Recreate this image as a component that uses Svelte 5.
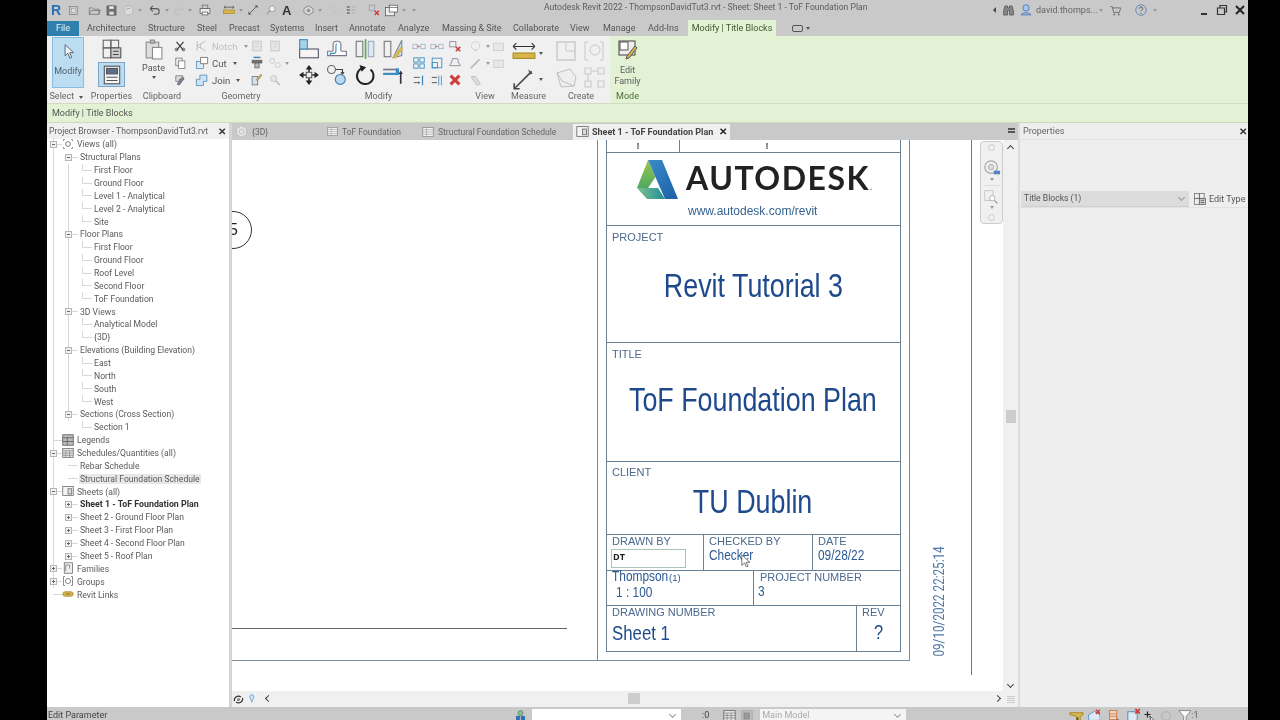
<script>
  const L = '#666', B = '#3b8ec4', Y = '#d9b64a', R = '#d23b3b';
  const rect = (x, y, w, h, s = L, f = 'none') => `<rect x="${x}" y="${y}" width="${w}" height="${h}" fill="${f}" stroke="${s}"/>`;
  const line = (d, s = L, w = 1) => `<path d="${d}" fill="none" stroke="${s}" stroke-width="${w}"/>`;
  const icons = {
    doc: rect(3, 3, 14, 14) + rect(6, 6, 8, 8, '#999', '#ddd'),
    open: line('M2 16V6h5l2 2h8v8zM2 16l3-6h14l-3 6'),
    save: rect(3, 3, 14, 14, '#555', '#777') + rect(6, 3, 8, 5, '#555', '#eee') + rect(6, 11, 8, 6, '#555', '#ddd'),
    sync: `<circle cx="10" cy="10" r="7" fill="#ddd" stroke="#aaa"/>` + line('M6 10a4 4 0 0 1 7-2', '#888'),
    undo: line('M3 8h9a4 4 0 0 1 0 8H8M3 8l4-4M3 8l4 4', '#555', 1.5),
    redo: line('M17 8H8a4 4 0 0 0 0 8h4M17 8l-4-4M17 8l-4 4', '#bbb', 1.5),
    print: rect(3, 8, 14, 7, '#555', '#eee') + rect(6, 3, 8, 5) + rect(6, 13, 8, 4, '#555', '#fff'),
    meas: rect(2, 10, 16, 5, '#a88a2a', Y) + line('M3 6h14M3 6l2-2M3 6l2 2M17 6l-2-2M17 6l-2 2', '#444'),
    dim: line('M3 17L17 3M3 13v4h4M13 3h4v4', '#444', 1.3),
    tag: `<circle cx="12" cy="8" r="5" fill="#eee" stroke="#777"/>` + line('M8 11l-5 6', '#555'),
    thd: `<path d="M10 3l7 4v6l-7 4-7-4V7z" fill="#ddd" stroke="#666"/><circle cx="10" cy="10" r="3" fill="#999"/>`,
    bulb: `<circle cx="10" cy="8" r="5" fill="none" stroke="#bbb"/>` + line('M8 14h4M8 17h4', '#bbb'),
    thin: line('M3 5h5M3 10h5M3 15h5', '#444', 2) + line('M11 5h6M11 10h6M11 15h6', '#8a8', 1),
    closeh: rect(3, 3, 8, 8, '#99a') + `<path d="M11 11l6 6M17 11l-6 6" stroke="${R}" stroke-width="2"/>`,
    wins: rect(2, 6, 12, 11, '#555', '#eee') + rect(7, 3, 11, 9, '#555', '#fff') + line('M7 6h11'),
    binoc: `<path d="M2.500 10l2-7h4v3h3V3h4l2 7v7h-6v-7h-3v7h-6z" fill="#888" stroke="#444"/>`,
    user: `<circle cx="10" cy="7" r="4.5" fill="#a9c6e8" stroke="#2d62ad"/><path d="M3 17c1-4 13-4 14 0z" fill="#a9c6e8" stroke="#2d62ad"/>`,
    cart: line('M2 4h3l2 9h9l2-7H6', '#666', 1.3) + `<circle cx="8" cy="16" r="1.4" fill="#666"/><circle cx="15" cy="16" r="1.4" fill="#666"/>`,
    help: `<circle cx="10" cy="10" r="7.5" fill="none" stroke="#4b7fb5" stroke-width="1.2"/><path d="M7.5 8a2.5 2.5 0 1 1 3.5 2.3c-.8.4-1 .8-1 1.7M10 14v1.5" fill="none" stroke="#555" stroke-width="1.3"/>`,
    arrow: `<path d="M6 2v13l3.2-3 2.4 6 2.2-1-2.4-5.6H16z" fill="#eef4fa" stroke="#4a5560"/>`,
    types: rect(2, 2, 7, 7) + rect(9, 2, 7, 7) + rect(2, 9, 7, 9) + rect(9, 9, 9, 9, '#555', '#ccc') + line('M11 12h5M11 15h5', '#444'),
    props: rect(3, 2, 14, 16, '#555', '#f4f4f4') + rect(5, 4, 10, 5, '#556', '#5c6f86') + line('M5 12h10M5 15h10', '#555'),
    paste: rect(3, 3, 12, 15, '#888', '#ddd') + rect(7, 1, 4, 3, '#888', '#bbb') + rect(9, 8, 9, 11, '#888', '#fff'),
    scis: line('M5 4l10 12M15 4L5 16', '#333', 1.5) + `<circle cx="5" cy="15" r="2" fill="none" stroke="#333"/><circle cx="15" cy="15" r="2" fill="none" stroke="#333"/>`,
    copy: rect(4, 3, 9, 11) + rect(8, 7, 9, 11, '#666', '#fff'),
    brush: `<path d="M4 4h10v5H9v3H4z" fill="#ddd" stroke="#666"/><path d="M16 8l-7 9-3-1 7-10z" fill="#8a7ab0" stroke="#554"/>`,
    notch: line('M3 3v14M3 10l12-7M3 10l12 7M8 7v6', '#bbb', 1.3),
    gsq: rect(4, 3, 12, 14, '#bbb', '#e6e6e6') + line('M7 7h6M7 11h6', '#ccc'),
    cut: rect(2, 8, 10, 10, '#3b7fb5', '#dceaf5') + `<path d="M8 2h10v9H8z" fill="#fff" stroke="#555"/>`,
    join: `<path d="M7 3h10v9h-5v6H2v-9h5z" fill="#cfe2f2" stroke="#3b7fb5"/>`,
    wall: rect(3, 6, 14, 4, '#555', '#777') + rect(7, 10, 6, 7, '#555', '#bbb') + line('M5 2h10', '#3b7fb5', 2),
    ggrp: `<circle cx="6" cy="7" r="3.5" fill="none" stroke="#bbb"/><circle cx="14" cy="13" r="3.5" fill="none" stroke="#bbb"/>`,
    paint: rect(3, 5, 8, 12, '#666', '#cfe0ee') + `<path d="M17 3l-6 8-2-1 6-8z" fill="${Y}" stroke="#886"/>`,
    mag: `<circle cx="8" cy="8" r="4.5" fill="#e4e4e4" stroke="#bbb"/>` + line('M11 11l6 6', '#bbb', 2),
    align: rect(1.500, 10, 17, 8, '#556', '#f4f4f4') + rect(1.500, 1.500, 7, 8.500, '#3b8ec4', '#a8d0ea'),
    offset: `<path d="M1.500 16v-4h4q1 0 1-1V6q0-3 3-3h1q3 0 3 3v5q0 1 1 1h4v4z" fill="#fff" stroke="#778"/><path d="M4 16v-2h3q2 0 2-2V7q0-1.500 1-1.500" fill="none" stroke="#3b8ec4"/>`,
    mirror: rect(2, 3, 6, 14, '#777') + rect(13, 3, 5, 14, '#9ab', '#dde8ef') + line('M10.500 1v18', '#5a5', 1.5),
    mirror2: rect(2, 3, 6, 14, '#777') + `<path d="M10 18L18 2v14z" fill="#cfe2f2" stroke="#789"/><path d="M18 9l-7 9" stroke="${Y}" stroke-width="3"/>`,
    move: `<path d="M10 1l3 4H7zM10 19l3-4H7zM1 10l4-3v6zM19 10l-4-3v6z" fill="#222"/>` + rect(7.5, 7.5, 5, 5, '#555', '#e8f1f8') + line('M10 4v3M10 13v3M4 10h3M13 10h3', '#222', 1.4),
    copym: `<circle cx="5" cy="5" r="3.6" fill="none" stroke="#666"/>` + `<circle cx="13" cy="14" r="4.5" fill="#bcd8ee" stroke="#3b7fb5"/>` + line('M9 5h6v4M13.500 7.500l1.500 1.500 1.500-1.500', '#444'),
    rotate: `<path d="M15 5a7.500 7.500 0 1 1-8-1" fill="none" stroke="#222" stroke-width="1.800"/><path d="M5 1l6 2-4 4z" fill="#222"/>`,
    trim: line('M1 5h14', '#778', 1.500) + line('M1 9h12', '#3b8ec4', 2) + line('M14 4v6', '#3b8ec4', 3) + line('M17 8v10', '#334', 1.500) + `<path d="M15 9l2-3 2 3z" fill="#334"/>`,
    s1: rect(1, 6, 5, 5, '#a8b4bc') + rect(10, 6, 5, 5, '#9ab8d0') + `<path d="M6 8.500h4M7.500 7l-1.500 1.500 1.500 1.500" fill="none" stroke="#b88"/>`,
    s2: rect(2, 2, 5, 5, B) + rect(9, 2, 5, 5, B) + rect(2, 9, 5, 5, B) + rect(9, 9, 5, 5, B),
    s3: line('M2 5h7M2 11h7', '#555') + `<path d="M9 11l-2-1.500v3z" fill="#555"/>` + line('M12 3v11', B, 1.5),
    s5: rect(2.500, 2.500, 11, 11, B) + rect(2.500, 7.500, 6, 6, B),
    s6: line('M2 5h6M2 11h6', '#444') + line('M10 3v11M13 3v11', B, 1),
    s7: rect(2, 3, 7, 6, '#889') + `<path d="M9 9l5 5M14 9l-5 5" stroke="${R}" stroke-width="1.800"/>`,
    s8: `<path d="M5 3h6l1 5 2 2v1H2v-1l2-2z" fill="none" stroke="#889"/>`,
    xred: `<path d="M3 3l10 10M13 3L3 13" stroke="${R}" stroke-width="3.4"/>`,
    gbulb: `<circle cx="8" cy="7" r="5" fill="none" stroke="#ccc"/>` + line('M6 13h4', '#ccc'),
    gbox: rect(2, 4, 12, 9, '#ccc', '#e8e8e8'),
    gline: line('M2 14L13 3', '#bbb', 2),
    gpipe: `<path d="M3 3h5l6 9-4 2-6-8z" fill="#ddd" stroke="#bbb"/>`,
    ruler: line('M1 5h20M1 5l3-3M1 5l3 3M21 5l-3-3M21 5l-3 3', '#333') + rect(1, 11, 20, 5, '#a88a2a', Y),
    diag: line('M3 19L18 4M2 15v5h5', '#444', 1.4) + `<path d="M15 2l4 4-3 1z" fill="#555"/>`,
    frm1: `<rect x="2" y="2" width="18" height="18" fill="none" stroke="#c8c8c8" stroke-width="1.4"/><path d="M11 2v9h9" fill="none" stroke="#c8c8c8"/>`,
    frm2: `<path d="M5 2H2v18h3M17 2h3v18h-3" fill="none" stroke="#c8c8c8"/><circle cx="12" cy="10" r="5" fill="none" stroke="#c8c8c8"/>`,
    box3: `<path d="M2 7l13-4 6 8-2 9-13 1z" fill="#eee" stroke="#c0c0c0"/><path d="M2 7l5 8 12 5" fill="none" stroke="#c0c0c0"/>`,
    nodes: rect(2, 2, 6, 6, '#c8c8c8') + rect(15, 2, 6, 6, '#c8c8c8') + rect(2, 15, 6, 6, '#c8c8c8') + rect(15, 15, 6, 6, '#c8c8c8') + line('M8 5h7M5 8v7', '#c8c8c8'),
    edit: rect(2, 2, 16, 14, '#444', '#eee') + rect(3, 3, 8, 8, '#555', '#fff') + `<path d="M20 9l-8 10-3 1 1-3 8-10z" fill="${Y}" stroke="#555"/>`,
    cube: `<path d="M8 1l6 3v8l-6 3-6-3V4z" fill="#e5e5e5" stroke="#bbb"/><circle cx="8" cy="8" r="3" fill="none" stroke="#bbb"/>`,
    tplan: rect(1, 2, 14, 12, '#888', '#f4f4f4') + line('M1 5h14M1 8h14M1 11h14M6 2v12', '#aaa'),
    sheet: rect(1, 2, 14, 12, '#666', '#f4f4f4') + rect(8, 5, 5, 7, '#666', '#ddd'),
    views: `<circle cx="8" cy="8" r="3.2" fill="none" stroke="#555"/>` + line('M2 4V2h2M12 2h2v2M14 12v2h-2M4 14H2v-2', '#777'),
    legend: rect(1, 1, 14, 14, '#555', '#bbb') + line('M1 5h14M1 10h14M7 5v10', '#555'),
    sched: rect(1, 2, 14, 12, '#666', '#e6e6e6') + line('M1 5h14M1 8h14M1 11h14M5 5v9M10 5v9', '#888'),
    fam: rect(3, 1, 11, 14, '#666', '#eee') + line('M5 12V4h5v5', '#777'),
    grp: line('M4 2H2v12h2M12 2h2v12h-2', '#666') + `<circle cx="8" cy="8" r="3.4" fill="none" stroke="#666"/>`,
    link: `<rect x="1" y="5" width="14" height="6" rx="3" fill="${Y}" stroke="#a88a2a"/>` + line('M5 8h6', '#555'),
    sync2: `<path d="M3 10a5 5 0 0 1 8-5M13 6a5 5 0 0 1-8 5" fill="none" stroke="#333" stroke-width="1.4"/><circle cx="8" cy="8" r="2" fill="#888"/>`,
    pin: `<path d="M7 1a3 3 0 0 1 3 3c0 2-2 4-3 8-1-4-3-6-3-8a3 3 0 0 1 3-3z" fill="#cfe2f8" stroke="#5b8ec4"/>`,
    wsets: `<circle cx="8" cy="5" r="3" fill="#8bbf8b" stroke="#4a8a5a"/>` + rect(3, 9, 4, 6, '#2b6fb0', '#2b6fb0') + rect(9, 9, 4, 6, '#2b6fb0', '#2b6fb0'),
    gh: rect(1, 1, 14, 14, '#aaa', '#bbb') + rect(4, 4, 7, 8, '#888', '#999'),
    nav: `<circle cx="9" cy="9" r="7" fill="none" stroke="#aaa" stroke-width="1.4"/><circle cx="9" cy="9" r="3" fill="#ddd" stroke="#aaa"/><path d="M12 15h7" stroke="#5b7fc4" stroke-width="4"/>`,
    zoom: rect(1, 1, 11, 13, '#bbb') + `<circle cx="11" cy="11" r="3.6" fill="#fff" stroke="#999"/>` + line('M14 14l4 4', '#999', 1.5),
    key: `<path d="M2 6h14v2l-3 2v6H9v-6L2 8z" fill="${Y}" stroke="#a88a2a"/>` + line('M10 11v6', '#555', 2),
    sx1: `<path d="M2 14V7l7-4 7 4v7z" fill="#dceaf5" stroke="#4a8ac0"/><path d="M11 1l5 5M16 1l-5 5" stroke="${R}" stroke-width="1.8"/>`,
    sx2: rect(3, 2, 9, 11, '#c8743a', '#f6d8c0') + line('M3 6h9M3 9h9', '#c8743a') + `<path d="M12 11l4 4-2 1z" fill="#333"/>`,
    sx3: rect(3, 4, 10, 12, '#4a8ac0', '#dceaf5') + `<path d="M11 1l5 5M16 1l-5 5" stroke="${R}" stroke-width="1.8"/>`,
    sx4: line('M2 6h8M6 2v8', '#222', 1.6) + `<path d="M9 8l6 6-3 .5-1 2.5z" fill="#fff" stroke="#222"/>`,
    sx5: `<circle cx="8" cy="8" r="6" fill="none" stroke="#bbb" stroke-width="2.4"/>`,
    filter: `<path d="M1 2h15l-6 7v8l-3-2V9z" fill="#fff" stroke="#777"/>`,
    cursor: `<path d="M1 1v13l3.4-3 2.2 5 2-1-2.2-4.800H11z" fill="#fff" stroke="#444" stroke-width=".9"/>`,
    logo: `<defs><linearGradient id="lg" x1="0" y1="0" x2="0" y2="1"><stop offset="0" stop-color="#9cc64a"/><stop offset="1" stop-color="#4fa862"/></linearGradient><linearGradient id="rg" x1="0" y1="0" x2="1" y2="1"><stop offset="0" stop-color="#3a8cc8"/><stop offset="1" stop-color="#1c5fa6"/></linearGradient><linearGradient id="tg" x1="0" y1="0" x2="1" y2="0"><stop offset="0" stop-color="#7fc08a"/><stop offset="1" stop-color="#1f8f9b"/></linearGradient></defs><path d="M0 28L11 0l7.500 17L11 28z" fill="url(#lg)"/><path d="M0 28h21l7 11H10z" fill="url(#tg)"/><path d="M11 0h14l16 39H28z" fill="url(#rg)"/>`
  };
  // icons drawn on another grid than the default 20 units
  const box16 = ['views', 'legend', 'sched', 'fam', 'grp', 'link', 'sheet', 'tplan', 'cube', 's1', 's2', 's3', 's5', 's6', 's7', 's8', 'xred', 'gbulb', 'gbox', 'gline', 'gpipe', 'sync2', 'pin', 'wsets', 'gh', 'sx1', 'sx2', 'sx3', 'sx4', 'sx5', 'filter', 'cursor'];
  const box22 = ['ruler', 'diag', 'frm1', 'frm2', 'box3', 'nodes', 'edit'];
  const viewBox = (n) => (n === 'logo' ? '0 0 41 39' : n === 'key' ? '0 0 18 18' : box16.includes(n) ? '0 0 16 16' : box22.includes(n) ? '0 0 22 22' : '0 0 20 20');

  const qatLeft = [['doc', 11, 7], ['open', 13, 9], ['save', 13, 4], ['sync', 13, 4], 'c', ['undo', 14, 3], 'c', ['redo', 13, 0], 'c', ['print', 14, 3], ['meas', 14, 10], 'c', ['dim', 12, 1], ['tag', 12, 6], 'A', ['thd', 13, 11], 'c', ['bulb', 10, 4], ['thin', 12, 6], ['closeh', 14, 10], ['wins', 15, 3], 'c', 'c'];
  const tabs = [['Architecture', 47], ['Structure', 35], ['Steel', 18], ['Precast', 27], ['Systems', 31], ['Insert', 20], ['Annotate', 35], ['Analyze', 30], ['Massing & Site', 57], ['Collaborate', 43], ['View', 19], ['Manage', 31], ['Add-Ins', 30]];

  const rows = [
    { t: 'Views (all)', d: 0, x: '-', i: 'views' },
    { t: 'Structural Plans', d: 1, x: '-' },
    ...['First Floor', 'Ground Floor', 'Level 1 - Analytical', 'Level 2 - Analytical', 'Site'].map((t) => ({ t, d: 2 })),
    { t: 'Floor Plans', d: 1, x: '-' },
    ...['First Floor', 'Ground Floor', 'Roof Level', 'Second Floor', 'ToF Foundation'].map((t) => ({ t, d: 2 })),
    { t: '3D Views', d: 1, x: '-' },
    ...['Analytical Model', '{3D}'].map((t) => ({ t, d: 2 })),
    { t: 'Elevations (Building Elevation)', d: 1, x: '-' },
    ...['East', 'North', 'South', 'West'].map((t) => ({ t, d: 2 })),
    { t: 'Sections (Cross Section)', d: 1, x: '-' },
    { t: 'Section 1', d: 2 },
    { t: 'Legends', d: 0, i: 'legend' },
    { t: 'Schedules/Quantities (all)', d: 0, x: '-', i: 'sched' },
    { t: 'Rebar Schedule', d: 1 },
    { t: 'Structural Foundation Schedule', d: 1, sel: true },
    { t: 'Sheets (all)', d: 0, x: '-', i: 'sheet' },
    { t: 'Sheet 1 - ToF Foundation Plan', d: 1, x: '+', bold: true },
    { t: 'Sheet 2 - Ground Floor Plan', d: 1, x: '+' },
    { t: 'Sheet 3 - First Floor Plan', d: 1, x: '+' },
    { t: 'Sheet 4 - Second Floor Plan', d: 1, x: '+' },
    { t: 'Sheet 5 - Roof Plan', d: 1, x: '+' },
    { t: 'Families', d: 0, x: '+', i: 'fam' },
    { t: 'Groups', d: 0, x: '+', i: 'grp' },
    { t: 'Revit Links', d: 0, i: 'link' }
  ];
  const modifySmall = ['s1', 's1', 's7', 's2', 's5', 's8', 's3', 's6', 'xred'];
  const statusRight = [['key', 17, 0], ['sx1', 13, 2], ['sx2', 13, 7], ['sx3', 15, 5], ['sx4', 12, 3], ['sx5', 12, 5]];
</script>

{#snippet ic(name, size)}
  <svg class="ic" width={size} height={size} viewBox={viewBox(name)}>{@html icons[name]}</svg>
{/snippet}

<div class="screen">
  <div class="win">
    <header class="titlebar">
      <div class="qat">
        <span class="qat-r">R</span>
        {#each qatLeft as q}
          {#if q === 'c'}<span class="caret"></span>
          {:else if q === 'A'}<span class="qat-a">A</span>
          {:else}<span class="qi" style="margin-left:{q[2]}px">{@render ic(q[0], q[1])}</span>{/if}
        {/each}
      </div>
      <div class="doc-title">Autodesk Revit 2022 - ThompsonDavidTut3.rvt - Sheet: Sheet 1 - ToF Foundation Plan</div>
      <div class="account">
        <span class="tri"></span>
        {@render ic('binoc', 13)}
        {@render ic('user', 14)}
        <span class="acc-name">david.thomps...</span><span class="caret"></span>
        {@render ic('cart', 13)}
        <span class="help">{@render ic('help', 14)}</span><span class="caret"></span>
      </div>
      <div class="winbtns">
        <svg width="12" height="12" viewBox="0 0 12 12"><path d="M3 10h6" stroke="#333" stroke-width="2"/></svg>
        <svg width="12" height="12" viewBox="0 0 12 12"><path d="M1.500 4h7v6.500h-7zM4 4V1.500h6.500V8H8.500" fill="none" stroke="#333" stroke-width="1.200"/></svg>
        <svg width="12" height="12" viewBox="0 0 12 12"><path d="M2 2l8 8M10 2l-8 8" stroke="#222" stroke-width="2"/></svg>
      </div>
    </header>

    <nav class="tabs">
      <span class="file">File</span>
      <div class="tablist">
        {#each tabs as t}<span class="tab" style="width:{t[1]}px">{t[0]}</span>{/each}
      </div>
      <span class="tab-active">Modify | Title Blocks</span>
      <span class="tab-extra"><i></i><span class="caret dark"></span></span>
    </nav>

    <section class="ribbon">
      <div class="grp g-select">
        <div class="body"><div class="modify-btn">{@render ic('arrow', 17)}<span>Modify</span></div></div>
        <div class="lbl">Select <span class="caret dark"></span></div>
      </div>
      <div class="grp g-props">
        <div class="body col">
          {@render ic('types', 22)}
          <div class="props-btn">{@render ic('props', 22)}</div>
        </div>
        <div class="lbl">Properties</div>
      </div>
      <div class="grp g-clip">
        <div class="body">
          <div class="paste">{@render ic('paste', 21)}<span>Paste</span><span class="caret dark"></span></div>
          <div class="smallcol">{@render ic('scis', 14)}{@render ic('copy', 14)}{@render ic('brush', 14)}</div>
        </div>
        <div class="lbl">Clipboard</div>
      </div>
      <div class="grp g-geo">
        <div class="body">
          <div class="geo-rows">
            <div class="tool off">{@render ic('notch', 14)}<span>Notch</span><span class="caret"></span></div>
            <div class="tool">{@render ic('cut', 14)}<span>Cut</span><span class="caret dark"></span></div>
            <div class="tool">{@render ic('join', 14)}<span>Join</span><span class="caret dark"></span></div>
          </div>
          <div class="geo-icons">
            {@render ic('gsq', 14)}{@render ic('gsq', 14)}
            {@render ic('wall', 14)}<span class="with-caret">{@render ic('ggrp', 14)}<span class="caret"></span></span>
            {@render ic('paint', 14)}{@render ic('mag', 14)}
          </div>
        </div>
        <div class="lbl">Geometry</div>
      </div>
      <div class="grp g-mod">
        <div class="body">
          <div class="big-grid">
            {#each ['align', 'offset', 'mirror', 'mirror2', 'move', 'copym', 'rotate', 'trim'] as n}{@render ic(n, 22)}{/each}
          </div>
          <div class="small-grid">
            {#each modifySmall as n}{@render ic(n, 14)}{/each}
          </div>
        </div>
        <div class="lbl">Modify</div>
      </div>
      <div class="grp g-view">
        <div class="body">
          <div class="view-grid">
            {@render ic('gbulb', 13)}<span class="caret"></span>{@render ic('gbox', 13)}
            {@render ic('gline', 13)}<span class="caret"></span>{@render ic('gbox', 13)}
            {@render ic('gpipe', 13)}
          </div>
        </div>
        <div class="lbl">View</div>
      </div>
      <div class="grp g-meas">
        <div class="body col">
          <div class="with-caret">{@render ic('ruler', 24)}<span class="caret dark"></span></div>
          <div class="with-caret">{@render ic('diag', 24)}<span class="caret dark"></span></div>
        </div>
        <div class="lbl">Measure</div>
      </div>
      <div class="grp g-create">
        <div class="body">
          <div class="create-grid">
            {@render ic('frm1', 22)}{@render ic('frm2', 22)}{@render ic('box3', 22)}{@render ic('nodes', 22)}
          </div>
        </div>
        <div class="lbl">Create</div>
      </div>
      <div class="grp g-mode">
        <div class="body col">
          {@render ic('edit', 22)}
          <span class="edit-text">Edit<br />Family</span>
        </div>
        <div class="lbl green">Mode</div>
      </div>
    </section>

    <div class="optbar">Modify | Title Blocks</div>

    <main class="main">
      <aside class="browser">
        <div class="browser-head"><span>Project Browser - ThompsonDavidTut3.rvt</span><b>✕</b></div>
        <div class="tree">
          {#each rows as r, n}
            <div class="row d{r.d}" class:sel={r.sel} class:bold={r.bold}>
              {#if n < 35}<i class="v v0"></i>{/if}
              {#if n >= 2 && n <= 21}<i class="v v1"></i>{/if}
              {#if r.d === 2}<i class="v v2"></i>{/if}
              <i class="h"></i>
              {#if r.x}<span class="exp" class:plus={r.x === '+'}></span>{/if}
              {#if r.i}<span class="ti">{@render ic(r.i, 12)}</span>{/if}
              <span class="tx">{r.t}</span>
            </div>
          {/each}
        </div>
      </aside>

      <section class="viewpane">
        <div class="doc-tabs">
          <span class="dt t1">{@render ic('cube', 13)}<span>&#123;3D&#125;</span></span>
          <span class="dt t2">{@render ic('tplan', 11)}<span>ToF Foundation</span></span>
          <span class="dt t3">{@render ic('tplan', 12)}<span>Structural Foundation Schedule</span></span>
          <span class="dt on">{@render ic('sheet', 13)}<b>Sheet 1 - ToF Foundation Plan</b><em>✕</em></span>
          <span class="dt-menu"><i></i><i></i></span>
        </div>
        <div class="view-body">
          <div class="canvas">
            <div class="bubble"><span>5</span></div>
            <div class="grid-line"></div>
            <div class="base-line"></div>
            <div class="right-line"></div>
            <div class="sheet">
              <div class="tb">
                <div class="tb-top"><span>!</span><span>!</span></div>
                <div class="tb-logo">
                  <div class="logo-row">{@render ic('logo', 41)}<span class="brand">AUTODESK<small>.</small></span></div>
                  <div class="url">www.autodesk.com/revit</div>
                </div>
                <div class="tb-cell h-project"><label>PROJECT</label><div class="big"><span>Revit Tutorial 3</span></div></div>
                <div class="tb-cell h-title"><label>TITLE</label><div class="big"><span>ToF Foundation Plan</span></div></div>
                <div class="tb-cell h-client"><label>CLIENT</label><div class="big"><span>TU Dublin</span></div></div>
                <div class="tb-row r1">
                  <div class="c drawn"><label>DRAWN BY</label><div class="dt-input">DT</div></div>
                  <div class="c checked"><label>CHECKED BY</label><span class="val">Checker</span><span class="mouse">{@render ic('cursor', 13)}</span></div>
                  <div class="c date"><label>DATE</label><span class="val">09/28/22</span></div>
                </div>
                <div class="tb-row r2">
                  <div class="c scale"><span class="val thom">Thompson</span><small class="thom-n">(1)</small><span class="val sc">1 : 100</span></div>
                  <div class="c pnum"><label>PROJECT NUMBER</label><span class="val">3</span></div>
                </div>
                <div class="tb-row r3">
                  <div class="c dnum"><label>DRAWING NUMBER</label><span class="val sheetno">Sheet 1</span></div>
                  <div class="c rev"><label>REV</label><span class="val q">?</span></div>
                </div>
              </div>
            </div>
            <div class="stamp">09/10/2022 22:25:14</div>
            <div class="navbar">
              <i class="dot"></i>
              {@render ic('nav', 18)}
              <span class="caret"></span>
              <hr />
              {@render ic('zoom', 15)}
              <span class="caret"></span>
              <i class="dot"></i>
            </div>
          </div>
          <div class="vscroll"><span class="chev up"></span><span class="thumb"></span><span class="chev down"></span></div>
        </div>
        <div class="hscroll">
          {@render ic('sync2', 13)}
          {@render ic('pin', 11)}
          <span class="chev left"></span>
          <span class="hthumb"></span>
          <span class="chev right"></span>
          <span class="grip"></span>
        </div>
      </section>

      <aside class="props">
        <div class="props-head"><span>Properties</span><b>✕</b></div>
        <div class="type-row">
          <div class="combo"><span>Title Blocks (1)</span><i></i></div>
          <div class="edit-type">{@render ic('types', 14)}<span>Edit Type</span></div>
        </div>
      </aside>
    </main>

    <footer class="status">
      <span class="msg">Edit Parameter</span>
      {@render ic('wsets', 13)}
      <div class="st-field"><i></i></div>
      <span class="st-zero">{@render ic('gbulb', 13)}:0</span>
      {@render ic('sched', 13)}
      {@render ic('gh', 12)}
      <div class="st-model"><span>Main Model</span><i></i></div>
      <div class="st-icons">
        {#each statusRight as s}<span style="margin-left:{s[2]}px">{@render ic(s[0], s[1])}</span>{/each}
        <span class="st-filter">{@render ic('filter', 13)}:1</span>
      </div>
    </footer>
  </div>
</div>

<style>
  :global(body) {
    margin: 0;
    background: #000;
  }

  .screen {
    width: 1280px;
    height: 720px;
    padding-left: 47px;
    box-sizing: border-box;
    background: #000;
    overflow: hidden;
  }

  .win {
    width: 1201px;
    height: 720px;
    display: flex;
    flex-direction: column;
    background: #c9c9c9;
    color: #555;
    font: 9px Roboto, sans-serif;
    filter: blur(0.35px);
    overflow: hidden;
  }

  .ic {
    display: block;
    flex: none;
  }

  .caret {
    display: inline-block;
    width: 0;
    height: 0;
    margin: 0 3px;
    border: 2px solid transparent;
    border-top: 3px solid #999;
    border-bottom: 0;
  }

  .caret.dark {
    border-top-color: #555;
  }

  /* title bar */
  .titlebar {
    height: 20px;
    display: flex;
    align-items: center;
    flex: none;
  }

  .qat {
    width: 497px;
    display: flex;
    align-items: center;
    flex: none;
  }

  .qat-r {
    margin-left: 4px;
    width: 10px;
    font: 700 14px "Liberation Sans", sans-serif;
    color: #2b72b3;
  }

  .qi {
    display: block;
  }

  .qat-a {
    margin-left: 5px;
    font: bold 13px "Liberation Sans", sans-serif;
    color: #333;
  }

  .doc-title {
    width: 330px;
    white-space: nowrap;
    color: #5d5d5d;
    font-size: 8.600px;
    margin-top: -6px;
    flex: none;
  }

  .account {
    margin-left: 119px;
    display: flex;
    align-items: center;
    gap: 4px;
    width: 203px;
    flex: none;
  }

  .tri {
    border: 3px solid transparent;
    border-right: 3px solid #444;
    border-left: 0;
    margin-right: 2px;
  }

  .acc-name {
    margin-left: -1px;
    width: 58px;
    white-space: nowrap;
    color: #666;
  }

  .account .caret {
    margin: 0 2px 0 1px;
  }

  .help {
    margin-left: 8px;
  }

  .winbtns {
    display: flex;
    gap: 6px;
    margin-left: 2px;
  }

  /* tabs */
  .tabs {
    height: 16px;
    display: flex;
    align-items: center;
    flex: none;
  }

  .file {
    width: 32px;
    height: 15px;
    line-height: 15px;
    text-align: center;
    background: #2f80ad;
    color: #e8f2f8;
  }

  .tablist {
    display: flex;
    gap: 14px;
    margin-left: 8px;
    width: 601px;
    flex: none;
  }

  .tab {
    white-space: nowrap;
  }

  .tab-active {
    width: 88px;
    height: 16px;
    line-height: 16px;
    text-align: center;
    background: #e3f1d4;
    color: #3d5a30;
    white-space: nowrap;
  }

  .tab-extra {
    margin-left: 16px;
    display: flex;
    align-items: center;
  }

  .tab-extra i {
    width: 11px;
    height: 7px;
    border: 1px solid #555;
    border-radius: 2px;
    box-sizing: border-box;
  }

  /* ribbon */
  .ribbon {
    height: 67px;
    display: flex;
    background: #e3f1d4;
    border-bottom: 1px solid #cfdcc2;
    flex: none;
  }

  .grp {
    display: flex;
    flex-direction: column;
    background: #f0f0f0;
    flex: none;
  }

  .body {
    height: 54px;
    display: flex;
    padding-top: 1px;
    box-sizing: border-box;
  }

  .body.col {
    flex-direction: column;
    align-items: center;
  }

  .lbl {
    height: 13px;
    line-height: 12px;
    text-align: center;
    white-space: nowrap;
    color: #666;
  }

  .lbl.green {
    color: #4d6f3a;
  }

  .g-select { width: 42px; }
  .g-props { width: 45px; }
  .g-clip { width: 56px; }
  .g-geo { width: 102px; }
  .g-mod { width: 173px; }
  .g-view { width: 40px; }
  .g-meas { width: 47px; }
  .g-create { width: 58px; }
  .g-mode {
    width: 35px;
    background: #e3f1d4;
  }

  .modify-btn {
    width: 32px;
    height: 51px;
    margin-left: 5px;
    box-sizing: border-box;
    background: #bcdcf2;
    border: 1px solid #87bde0;
    display: flex;
    flex-direction: column;
    align-items: center;
    gap: 6px;
    padding-top: 5px;
    color: #50606c;
  }

  .g-props .body {
    padding-top: 2px;
  }

  .props-btn {
    width: 27px;
    height: 25px;
    margin-top: 2px;
    box-sizing: border-box;
    background: #bcdcf2;
    border: 1px solid #7aa7c8;
    display: flex;
    align-items: center;
    justify-content: center;
  }

  .paste {
    width: 39px;
    display: flex;
    flex-direction: column;
    align-items: center;
    padding-top: 2px;
  }

  .paste span:not(.caret) {
    margin-top: 3px;
  }

  .paste .caret {
    margin-top: 3px;
  }

  .smallcol {
    display: flex;
    flex-direction: column;
    gap: 3px;
    padding-top: 2px;
  }

  .g-geo .body {
    padding-left: 5px;
  }

  .geo-rows {
    width: 55px;
    display: flex;
    flex-direction: column;
    padding-top: 2px;
    gap: 3px;
  }

  .tool {
    height: 14px;
    display: flex;
    align-items: center;
    gap: 3px;
    white-space: nowrap;
    font-size: 9.5px;
  }

  .tool.off {
    color: #c0c0c0;
  }

  .geo-icons {
    display: grid;
    grid-template-columns: 14px 22px;
    gap: 3px 4px;
    padding-top: 2px;
    align-content: start;
  }

  .with-caret {
    display: flex;
    align-items: center;
  }

  .g-mod .body {
    padding: 2px 0 0 6px;
  }

  .big-grid {
    display: grid;
    grid-template-columns: repeat(4, 22px);
    gap: 4px 6px;
    align-content: start;
  }

  .small-grid {
    margin-left: 8px;
    display: grid;
    grid-template-columns: repeat(3, 14px);
    gap: 3px 4px;
    padding-top: 1px;
    align-content: start;
  }

  .view-grid {
    margin: 3px 0 0 4px;
    display: grid;
    grid-template-columns: 13px 8px 13px;
    gap: 4px 1px;
    align-content: start;
    align-items: center;
  }

  .g-meas .body {
    gap: 2px;
    padding-top: 5px;
    align-items: flex-start;
    padding-left: 7px;
  }

  .create-grid {
    margin: 3px 0 0 3px;
    display: grid;
    grid-template-columns: 22px 22px;
    gap: 4px 6px;
    align-content: start;
  }

  .g-mode .body {
    padding-top: 3px;
  }

  .edit-text {
    text-align: center;
    line-height: 11px;
    margin-top: 4px;
    color: #5d5d5d;
  }

  .optbar {
    height: 19px;
    line-height: 18px;
    padding-left: 5px;
    background: #e3f1d4;
    border-bottom: 1px solid #cdd9c0;
    color: #555;
    box-sizing: border-box;
    flex: none;
  }

  /* main */
  .main {
    height: 584px;
    display: flex;
    background: #d4d4d4;
    flex: none;
    overflow: hidden;
  }

  .browser {
    width: 182px;
    background: #fff;
    margin-right: 2px;
    flex: none;
    font-size: 8.600px;
  }

  .browser-head {
    height: 16px;
    padding: 0 3px 0 2px;
    display: flex;
    align-items: center;
    justify-content: space-between;
    background: #f0f0f0;
    white-space: nowrap;
    color: #5e5e5e;
  }

  .browser-head b {
    color: #333;
    font-size: 10px;
  }

  .tree {
    margin-top: -1px;
  }

  .row {
    position: relative;
    height: 12.860px;
    display: flex;
    align-items: center;
    white-space: nowrap;
    color: #5a5a5a;
  }

  .v, .h {
    position: absolute;
    background: #d8d8d8;
  }

  .v {
    top: 0;
    bottom: 0;
    width: 1px;
  }

  .v0 { left: 6px; }
  .v1 { left: 21px; }
  .v2 { left: 35px; bottom: 6px; }

  .h {
    top: 6px;
    height: 1px;
  }

  .d0 .h { left: 6px; width: 9px; }
  .d1 .h { left: 21px; width: 10px; }
  .d2 .h { left: 35px; width: 10px; }

  .exp {
    position: absolute;
    top: 3px;
    width: 7px;
    height: 7px;
    box-sizing: border-box;
    border: 1px solid #b5b5b5;
    background: #f2f2f2;
  }

  .exp::after {
    content: "";
    position: absolute;
    left: 1px;
    top: 2px;
    width: 3px;
    height: 1px;
    background: #666;
  }

  .exp.plus::before {
    content: "";
    position: absolute;
    left: 2px;
    top: 1px;
    width: 1px;
    height: 3px;
    background: #666;
  }

  .d0 .exp { left: 3px; }
  .d1 .exp { left: 18px; }

  .ti {
    position: absolute;
    left: 15px;
    top: 0;
    background: #fff;
  }

  .tx {
    position: relative;
  }

  .d0 .tx { margin-left: 30px; }
  .d1 .tx { margin-left: 33px; }
  .d2 .tx { margin-left: 47px; }

  .row.sel .tx {
    background: #e8e8e8;
    margin-left: 32px;
    padding: 0 1px;
  }

  .row.bold {
    color: #333;
    font-weight: 700;
    font-size: 8.800px;
  }

  /* view */
  .viewpane {
    width: 786px;
    display: flex;
    flex-direction: column;
    flex: none;
    margin-left: 1px;
  }

  .doc-tabs {
    height: 17px;
    position: relative;
    background: #c9c9c9;
    display: flex;
    align-items: center;
    flex: none;
  }

  .dt {
    display: flex;
    align-items: center;
    gap: 4px;
    color: #666;
    white-space: nowrap;
    height: 16px;
    flex: none;
    font-size: 8.500px;
  }

  .t1 { margin-left: 3px; width: 92px; }
  .t2 { width: 95px; }
  .t3 { width: 151px; }

  .dt.on {
    background: #f0f0f0;
    width: 157px;
    padding-left: 3px;
    gap: 3px;
    box-sizing: border-box;
    color: #444;
    font-size: 9px;
  }

  .dt.on em {
    font-style: normal;
    font-weight: 700;
    font-size: 10px;
    color: #222;
    margin-left: 3px;
  }

  .dt-menu {
    position: absolute;
    right: 3px;
    top: 5px;
    display: flex;
    flex-direction: column;
    gap: 1px;
  }

  .dt-menu i {
    width: 7px;
    height: 2px;
    background: #555;
  }

  .view-body {
    height: 551px;
    display: flex;
    flex: none;
  }

  .canvas {
    position: relative;
    width: 771px;
    background: #fff;
    overflow: hidden;
    flex: none;
  }

  /* canvas origin is at x=232, y=140 in the screenshot */
  .bubble {
    position: absolute;
    left: -18px;
    top: 71px;
    width: 38px;
    height: 38px;
    border: 1px solid #333;
    border-radius: 50%;
    box-sizing: border-box;
  }

  .bubble span {
    position: absolute;
    right: 13px;
    top: 9px;
    font: 16px "Liberation Sans", sans-serif;
    color: #222;
  }

  .grid-line {
    position: absolute;
    left: 0;
    top: 488px;
    width: 335px;
    height: 1px;
    background: #666;
  }

  .base-line {
    position: absolute;
    left: 0;
    top: 520px;
    width: 677px;
    height: 1px;
    background: #7f8f9c;
  }

  .right-line {
    position: absolute;
    left: 739px;
    top: 0;
    bottom: 16px;
    width: 1px;
    background: #5f7a9c;
  }

  .sheet {
    position: absolute;
    left: 365px;
    top: -1px;
    width: 313px;
    height: 522px;
    box-sizing: border-box;
    border-left: 1px solid #6f8ba0;
    border-right: 1px solid #6f8ba0;
    padding-left: 8px;
  }

  .tb {
    width: 295px;
    border-left: 1px solid #6a8094;
    border-right: 1px solid #6a8094;
    border-bottom: 1px solid #6a8094;
    box-sizing: border-box;
    font-family: "Liberation Sans", sans-serif;
    color: #1e4a8c;
  }

  .tb label {
    display: block;
    font-size: 11px;
    line-height: 12px;
    color: #4c6a8e;
  }

  .tb-top {
    height: 13px;
    display: flex;
    border-bottom: 1px solid #6a8094;
    font-size: 9px;
    font-weight: 700;
    color: #444;
  }

  .tb-top span {
    text-align: center;
    line-height: 12px;
    padding-top: 1px;
  }

  .tb-top span:first-child {
    width: 73px;
    border-right: 1px solid #6a8094;
    padding-right: 10px;
    box-sizing: border-box;
  }

  .tb-top span:last-child {
    width: 174px;
  }

  .tb-logo {
    height: 72px;
    border-bottom: 1px solid #6a8094;
    padding-left: 30px;
  }

  .logo-row {
    display: flex;
    align-items: center;
    gap: 8px;
    padding-top: 7px;
    height: 39px;
  }

  .brand {
    font: 700 32px Lato, "Open Sans", sans-serif;
    color: #222;
    letter-spacing: 1.500px;
    line-height: 30px;
    margin-top: 5px;
  }

  .brand small {
    font-size: 9px;
    color: #777;
  }

  .url {
    font-size: 12px;
    color: #33628f;
    margin: 5px 0 0 51px;
    white-space: nowrap;
  }

  .tb-cell {
    box-sizing: border-box;
    border-bottom: 1px solid #6a8094;
    padding: 5px 5px 0;
  }

  .h-project { height: 117px; }
  .h-title { height: 119px; }
  .h-client {
    height: 73px;
    padding-top: 4px;
  }

  .big {
    font-size: 34px;
    display: flex;
    justify-content: center;
    color: #1e4a8c;
    white-space: nowrap;
    margin-right: 1px;
  }

  .big span {
    flex: none;
    transform: scaleX(0.79);
  }

  .h-project .big { margin-top: 23px; }
  .h-title .big { margin-top: 20px; }
  .h-client .big { margin-top: 4px; }

  .tb-row {
    display: flex;
    border-bottom: 1px solid #6a8094;
    box-sizing: border-box;
  }

  .tb-row:last-child {
    border-bottom: 0;
  }

  .r1 { height: 36px; }
  .r2 { height: 35px; }
  .r3 { height: 45px; }

  .c {
    position: relative;
    box-sizing: border-box;
    padding: 0 5px;
    border-right: 1px solid #6a8094;
  }

  .c:last-child {
    border-right: 0;
  }

  .val {
    display: block;
    font-size: 14.500px;
    color: #2c5a94;
    white-space: nowrap;
    transform: scaleX(0.82);
    transform-origin: left;
  }

  .drawn { width: 97px; }
  .checked { width: 109px; }
  .date { flex: 1; }
  .scale { width: 147px; }
  .pnum { flex: 1; padding-left: 6px; }
  .dnum { width: 250px; }
  .rev { flex: 1; }

  .dt-input {
    width: 75px;
    height: 19px;
    line-height: 17px;
    margin: 2px 0 0 -1px;
    padding-left: 1px;
    box-sizing: border-box;
    border: 1px solid #a9c4b8;
    font: 700 9px "Open Sans", sans-serif;
    color: #222;
  }

  .mouse {
    position: absolute;
    left: 37px;
    top: 19px;
  }

  .thom {
    line-height: 13px;
    margin-top: -1px;
  }

  .thom-n {
    position: absolute;
    left: 62px;
    top: 1px;
    font-size: 9.500px;
    color: #2c5a94;
  }

  .sc {
    line-height: 16px;
    margin: 1px 0 0 4px;
  }

  .pnum .val {
    margin: 0 0 0 -2px;
  }

  .sheetno {
    font-size: 20.500px;
    color: #1e4a8c;
    margin-top: 3px;
  }

  .q {
    font-size: 20px;
    margin: 3px 0 0 12px;
    color: #1e4a8c;
  }

  .stamp {
    position: absolute;
    left: 699px;
    top: 400px;
    height: 127px;
    writing-mode: vertical-rl;
    transform: rotate(180deg) scaleY(0.835);
    font-size: 14px;
    color: #5278a8;
    white-space: nowrap;
  }

  .navbar {
    position: absolute;
    left: 748px;
    top: 1px;
    width: 23px;
    height: 83px;
    box-sizing: border-box;
    border: 1px solid #ccc;
    border-radius: 4px;
    background: #f0f0f0;
    display: flex;
    flex-direction: column;
    align-items: center;
    padding-top: 2px;
    gap: 1px;
  }

  .navbar hr {
    width: 16px;
    margin: 3px 0;
    border: 0;
    border-top: 1px solid #ddd;
  }

  .navbar .dot {
    width: 5px;
    height: 5px;
    border: 1px solid #ccc;
    border-radius: 50%;
    margin-bottom: 7px;
  }

  .navbar .dot:last-child {
    margin: auto 0 2px;
  }

  .vscroll {
    position: relative;
    width: 15px;
    background: #f0f0f0;
    flex: none;
  }

  .thumb {
    position: absolute;
    left: 3px;
    top: 270px;
    width: 10px;
    height: 13px;
    background: #cdcdcd;
  }

  .chev {
    position: absolute;
    width: 5px;
    height: 5px;
    border-left: 1.500px solid #444;
    border-top: 1.500px solid #444;
    box-sizing: border-box;
  }

  .chev.up { left: 5px; top: 6px; transform: rotate(45deg); }
  .chev.down { left: 5px; bottom: 4px; transform: rotate(225deg); }

  .hscroll {
    position: relative;
    height: 16px;
    background: #f0f0f0;
    display: flex;
    align-items: center;
    gap: 2px;
    flex: none;
  }

  .chev.left { left: 34px; top: 5px; transform: rotate(-45deg); }
  .chev.right { left: 763px; top: 5px; transform: rotate(135deg); }

  .hthumb {
    position: absolute;
    left: 396px;
    top: 2px;
    width: 12px;
    height: 11px;
    background: #cdcdcd;
  }

  .grip {
    position: absolute;
    right: 3px;
    top: 5px;
    width: 8px;
    height: 7px;
    background: repeating-linear-gradient(0deg, #ccc 0 1px, #f0f0f0 1px 2px);
  }

  /* properties */
  .props {
    flex: 1;
    min-width: 0;
    background: #eeeeee;
    border-left: 2px solid #dcdcdc;
  }

  .props-head {
    height: 17px;
    display: flex;
    align-items: center;
    justify-content: space-between;
    padding: 0 1px 0 3px;
    color: #666;
    border-bottom: 1px solid #e4e4e4;
    box-sizing: border-box;
  }

  .props-head b {
    font-size: 10px;
    color: #333;
  }

  .type-row {
    margin-top: 50px;
    height: 17px;
    display: flex;
    align-items: center;
    border-bottom: 1px solid #e2e2e2;
  }

  .combo {
    width: 168px;
    height: 16px;
    margin-left: 1px;
    background: #dcdcdc;
    border-bottom: 1px solid #cfcfcf;
    display: flex;
    align-items: center;
    justify-content: space-between;
    padding: 0 3px;
    box-sizing: border-box;
    color: #555;
    flex: none;
    font-size: 8.600px;
  }

  .combo i, .st-field i, .st-model i {
    width: 4px;
    height: 4px;
    border-right: 1px solid #999;
    border-bottom: 1px solid #999;
    transform: rotate(45deg);
    margin: 0 2px 2px 0;
  }

  .edit-type {
    display: flex;
    align-items: center;
    gap: 2px;
    margin-left: 4px;
    white-space: nowrap;
  }

  /* status bar */
  .status {
    flex: 1;
    display: flex;
    align-items: center;
    color: #555;
    line-height: 13px;
  }

  .msg {
    width: 467px;
    padding-left: 1px;
    box-sizing: border-box;
    white-space: nowrap;
    color: #444;
    flex: none;
  }

  .status > :global(svg) {
    margin-right: 5px;
  }

  .st-field {
    width: 149px;
    height: 13px;
    background: #fff;
    display: flex;
    align-items: center;
    justify-content: flex-end;
    padding-right: 4px;
    box-sizing: border-box;
    flex: none;
  }

  .st-zero {
    display: flex;
    align-items: center;
    margin: 0 14px 0 8px;
    color: #444;
  }

  .st-model {
    width: 146px;
    height: 13px;
    margin-left: 2px;
    background: #f4f4f4;
    color: #aaa;
    display: flex;
    align-items: center;
    justify-content: space-between;
    padding: 0 4px 0 2px;
    box-sizing: border-box;
    flex: none;
  }

  .st-icons {
    margin-left: 162px;
    display: flex;
    align-items: center;
  }

  .st-filter {
    display: flex;
    align-items: center;
    margin-left: 6px;
    color: #666;
  }
</style>
